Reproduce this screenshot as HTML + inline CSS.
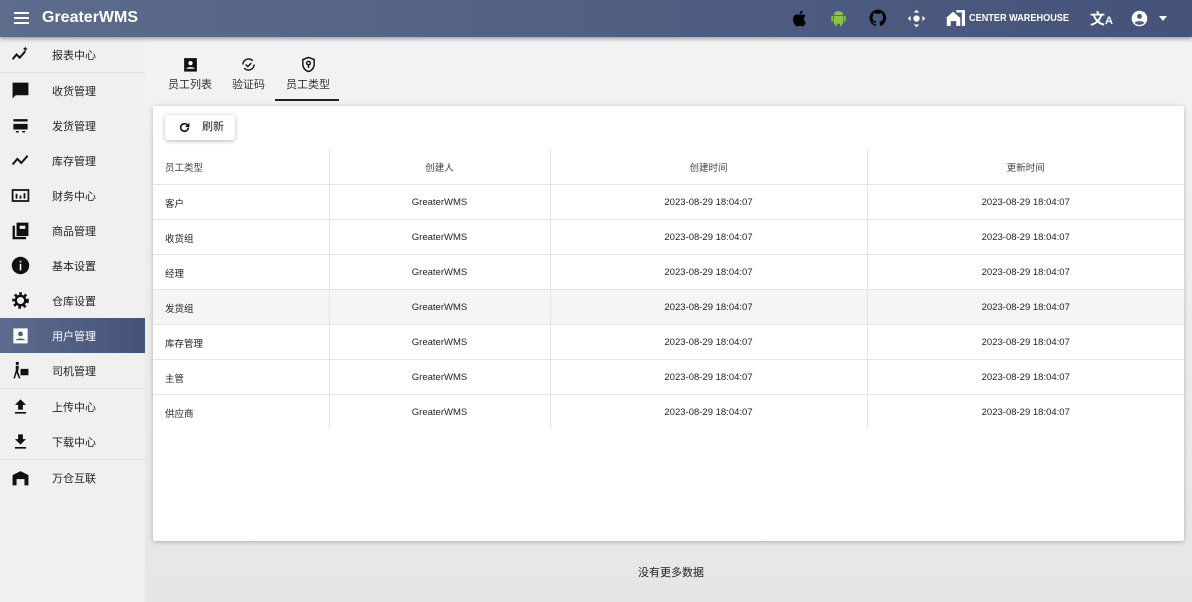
<!DOCTYPE html><html><head><meta charset="utf-8"><style>
*{box-sizing:border-box;margin:0;padding:0}
body{width:1192px;height:602px;overflow:hidden;font-family:"Liberation Sans","Noto Sans CJK SC",sans-serif;background:#eaeaea;position:relative;font-size:12px;color:#222}
.hdr{position:absolute;left:0;top:0;width:1192px;height:37px;background:linear-gradient(90deg,#5d6b8c,#45537a);box-shadow:0 2px 4px rgba(0,0,0,.35);z-index:3;color:#fff}
.side{position:absolute;left:0;top:37px;width:145px;height:565px;background:#f0f0f0;box-shadow:1px 0 3px rgba(0,0,0,.2)}
.it{height:35px;box-sizing:content-box;display:flex;align-items:center;font-size:11px;position:relative}
.it svg{position:absolute;left:11px;width:19px;height:19px}
.it span{position:absolute;left:52px}
.act{background:linear-gradient(90deg,#5d6b8c,#45537a);color:#fff}
.div{border-bottom:1px solid #ddd}
.main{position:absolute;left:145px;top:37px;right:0;bottom:0;background:linear-gradient(180deg,#f3f3f3,#e6e6e6)}
.tab{position:absolute;top:19px;text-align:center;font-size:11px;color:#333}
.card{position:absolute;left:8px;top:69px;width:1031px;height:435px;background:#fff;box-shadow:0 1px 5px rgba(0,0,0,.25);border-radius:2px}
table{position:absolute;top:43px;left:0;width:1031px;border-collapse:collapse;font-size:9.5px}
td{height:35px;border-bottom:1px solid #e4e4e4;border-right:1px solid #e4e4e4;text-align:center;padding-top:2px}
td:first-child{text-align:left;padding-left:12px;width:176px}
td:nth-child(2){width:221px}td:nth-child(3){width:317px}td:last-child{border-right:none}
tr.h td{color:#444}
</style></head><body>
<div class="hdr">
<div style="position:absolute;left:14px;top:12px;width:15px;height:2px;background:#fff;box-shadow:0 5px #fff,0 10px #fff"></div>
<div style="position:absolute;left:42px;top:9px;font-size:16px;font-weight:bold">GreaterWMS</div>
<svg style="position:absolute;left:790px;top:9px" width="19" height="19" viewBox="0 0 24 24"><path fill="#000" d="M18.7 19.5c-.8 1.2-1.7 2.5-3 2.5-1.3 0-1.8-.8-3.3-.8-1.5 0-2 .8-3.3.8-1.3.1-2.3-1.3-3.1-2.5-1.7-2.5-3-7.1-1.2-10.2.9-1.5 2.4-2.5 4.1-2.5 1.3 0 2.5.9 3.3.9.8 0 2.2-1.1 3.8-.9.7 0 2.5.3 3.7 2-.1.1-2.2 1.3-2.2 3.8 0 3 2.6 4 2.7 4-.1.1-.4 1.4-1.5 2.9M13 3.5c.7-.8 1.9-1.5 2.9-1.5.1 1.2-.3 2.4-1 3.2-.7.8-1.8 1.5-2.9 1.4-.2-1.2.4-2.4 1-3.1z"/></svg>
<svg style="position:absolute;left:829px;top:9px" width="19" height="20" viewBox="0 0 24 24"><path fill="#8bc34a" d="M6 8h12v9a1 1 0 0 1-1 1h-1v3h-2v-3h-4v3H8v-3H7a1 1 0 0 1-1-1zM3 8h2v7H3zm16 0h2v7h-2zM6 7a6 5 0 0 1 12 0z"/></svg>
<svg style="position:absolute;left:868px;top:8px" width="20" height="20" viewBox="0 0 24 24"><path fill="#000" d="M12 2A10 10 0 0 0 8.8 21.5c.5.1.7-.2.7-.5v-1.7c-2.8.6-3.4-1.3-3.4-1.3-.4-1.2-1.1-1.5-1.1-1.5-.9-.6.1-.6.1-.6 1 .1 1.5 1 1.5 1 .9 1.5 2.300 1.1 2.9.8.1-.6.3-1.1.6-1.3-2.2-.3-4.600-1.1-4.600-5 0-1.1.4-2 1-2.7-.1-.3-.4-1.3.1-2.6 0 0 .8-.3 2.7 1a9.4 9.4 0 0 1 5 0c1.9-1.3 2.7-1 2.7-1 .5 1.4.2 2.4.1 2.6.6.7 1 1.6 1 2.7 0 3.9-2.3 4.7-4.6 4.9.4.3.7.9.7 1.9V21c0 .3.2.6.7.5A10 10 0 0 0 12 2z"/></svg>
<svg style="position:absolute;left:907px;top:9px" width="19" height="19" viewBox="0 0 24 24"><path fill="#fff" d="M12 1l3.5 3.5h-7zM12 23l-3.5-3.5h7zM1 12l3.5-3.5v7zM23 12l-3.5 3.5v-7zM12 8a4 4 0 1 1 0 8 4 4 0 0 1 0-8z"/></svg>
<svg style="position:absolute;left:946px;top:10px" width="19" height="16" viewBox="0 0 24 20"><path fill="#fff" d="M0 10L9 2l9 8v10h-5v-6H6v6H1V10zM13 0h11v20h-4V3h-7z"/></svg>
<div style="position:absolute;left:969px;top:12px;font-size:10.5px;font-weight:bold;transform:scaleX(.87);transform-origin:left">CENTER WAREHOUSE</div>
<div style="position:absolute;left:1090px;top:8px;font-size:15px;font-weight:bold">文<span style="font-size:11px">A</span></div>
<svg style="position:absolute;left:1131px;top:10px" width="17" height="17" viewBox="0 0 24 24"><circle cx="12" cy="12" r="11" fill="#fff"/><circle cx="12" cy="9" r="3.5" fill="#4f5d80"/><path fill="#4f5d80" d="M5 18c2-3 12-3 14 0-2 2-4 3-7 3s-5-1-7-3z"/></svg>
<div style="position:absolute;left:1159px;top:16px;border:4px solid transparent;border-top:5px solid #fff"></div>
</div>
<div class="side">
<div class="it div"><svg viewBox="0 0 24 24"><path fill="none" stroke="#111" stroke-width="2.5" d="M2 18l5-6 4 4 7-8"/><path fill="#111" d="M18 2l1 2 2 1-2 1-1 2-1-2-2-1 2-1z"/></svg><span>报表中心</span></div>
<div class="it"><svg viewBox="0 0 24 24"><path fill="#111" d="M2 2h20v16H6l-4 4zM6 6h12v2H6zm0 4h12v2H6z"/></svg><span>收货管理</span></div>
<div class="it"><svg viewBox="0 0 24 24"><path fill="#111" d="M3 4h18v3H3zM3 10h18v7H3zM6 19a2 2 0 1 0 4 0zm8 0a2 2 0 1 0 4 0z"/></svg><span>发货管理</span></div>
<div class="it"><svg viewBox="0 0 24 24"><path fill="none" stroke="#111" stroke-width="2.5" d="M2 17l6-7 5 5 8-9"/></svg><span>库存管理</span></div>
<div class="it"><svg viewBox="0 0 24 24"><path fill="none" stroke="#111" stroke-width="2.2" d="M2 5h20v14H2zM7 10v6M12 12v4M17 9v7"/></svg><span>财务中心</span></div>
<div class="it"><svg viewBox="0 0 24 24"><path fill="#111" d="M2 6h3v14h14v3H2zM7 2h15v17H7zm4 4v4h7V6z"/></svg><span>商品管理</span></div>
<div class="it"><svg viewBox="0 0 24 24"><circle cx="12" cy="12" r="11" fill="#111"/><path fill="#fff" d="M11 10h2v8h-2zm0-4h2v2h-2z"/></svg><span>基本设置</span></div>
<div class="it"><svg viewBox="0 0 24 24"><circle cx="12" cy="12" r="8" fill="none" stroke="#111" stroke-width="5" stroke-dasharray="3 3"/><circle cx="12" cy="12" r="6" fill="none" stroke="#111" stroke-width="3"/></svg><span>仓库设置</span></div>
<div class="it act"><svg viewBox="0 0 24 24"><path fill="#fff" d="M3 3h18v19H3z"/><circle cx="12" cy="10" r="3" fill="#4f5d80"/><path fill="#4f5d80" d="M6 18c1-3 11-3 12 0z"/></svg><span>用户管理</span></div>
<div class="it div"><svg viewBox="0 0 24 24"><circle cx="8" cy="3" r="2" fill="#111"/><path fill="#111" d="M6 6h4l-1 8 3 8H10l-3-7-2 7H3l3-10zM12 10h10v8H12z"/></svg><span>司机管理</span></div>
<div class="it"><svg viewBox="0 0 24 24"><path fill="#111" d="M12 3l7 7h-4v6H9v-6H5zM5 19h14v2H5z"/></svg><span>上传中心</span></div>
<div class="it div"><svg viewBox="0 0 24 24"><path fill="#111" d="M9 3h6v6h4l-7 7-7-7h4zM5 19h14v2H5z"/></svg><span>下载中心</span></div>
<div class="it"><svg viewBox="0 0 24 24"><path fill="#111" d="M2 9l10-5 10 5v13h-5v-8H7v8H2z"/></svg><span>万仓互联</span></div>
</div>
<div class="main">
<div class="tab" style="left:23px"><svg width="17" height="17" viewBox="0 0 24 24"><path fill="#111" d="M3 3h18v19H3z"/><circle cx="12" cy="10" r="3" fill="#fff"/><path fill="#fff" d="M6 18c1-3 11-3 12 0z"/></svg><div>员工列表</div></div>
<div class="tab" style="left:87px"><svg width="17" height="17" viewBox="0 0 24 24"><path fill="none" stroke="#111" stroke-width="2" d="M4 12a8 8 0 0 1 14-5M20 12a8 8 0 0 1-14 5M8 12l3 3 5-5"/></svg><div>验证码</div></div>
<div class="tab" style="left:141px"><svg width="17" height="17" viewBox="0 0 24 24"><path fill="none" stroke="#111" stroke-width="2" d="M12 2l8 3v7c0 5-4 9-8 10-4-1-8-5-8-10V5z"/><circle cx="12" cy="10" r="2.5" fill="none" stroke="#111" stroke-width="2"/><path stroke="#111" stroke-width="2" d="M12 12v5"/></svg><div>员工类型</div></div>
<div style="position:absolute;left:130px;top:62px;width:64px;height:2px;background:#222"></div>
<div class="card">
<div style="position:absolute;left:12px;top:9px;width:70px;height:25px;background:#fff;box-shadow:0 1px 4px rgba(0,0,0,.3);border-radius:3px;font-size:11px;line-height:25px;padding-left:37px">刷新
<svg style="position:absolute;left:13px;top:6px" width="13" height="13" viewBox="0 0 24 24"><path fill="none" stroke="#111" stroke-width="3" d="M19 12a7 7 0 1 1-2-5"/><path fill="#111" d="M21 3v8h-8z"/></svg></div>
<table>
<tr class="h"><td>员工类型</td><td>创建人</td><td>创建时间</td><td>更新时间</td></tr>
<tr><td>客户</td><td>GreaterWMS</td><td>2023-08-29 18:04:07</td><td>2023-08-29 18:04:07</td></tr>
<tr><td>收货组</td><td>GreaterWMS</td><td>2023-08-29 18:04:07</td><td>2023-08-29 18:04:07</td></tr>
<tr><td>经理</td><td>GreaterWMS</td><td>2023-08-29 18:04:07</td><td>2023-08-29 18:04:07</td></tr>
<tr style="background:#f5f5f5"><td>发货组</td><td>GreaterWMS</td><td>2023-08-29 18:04:07</td><td>2023-08-29 18:04:07</td></tr>
<tr><td>库存管理</td><td>GreaterWMS</td><td>2023-08-29 18:04:07</td><td>2023-08-29 18:04:07</td></tr>
<tr><td>主管</td><td>GreaterWMS</td><td>2023-08-29 18:04:07</td><td>2023-08-29 18:04:07</td></tr>
<tr><td style="border-bottom:none">供应商</td><td style="border-bottom:none">GreaterWMS</td><td style="border-bottom:none">2023-08-29 18:04:07</td><td style="border-bottom:none">2023-08-29 18:04:07</td></tr>
</table></div>
<div style="position:absolute;left:493px;top:527px;font-size:11px">没有更多数据</div>
</div>
</body></html>
